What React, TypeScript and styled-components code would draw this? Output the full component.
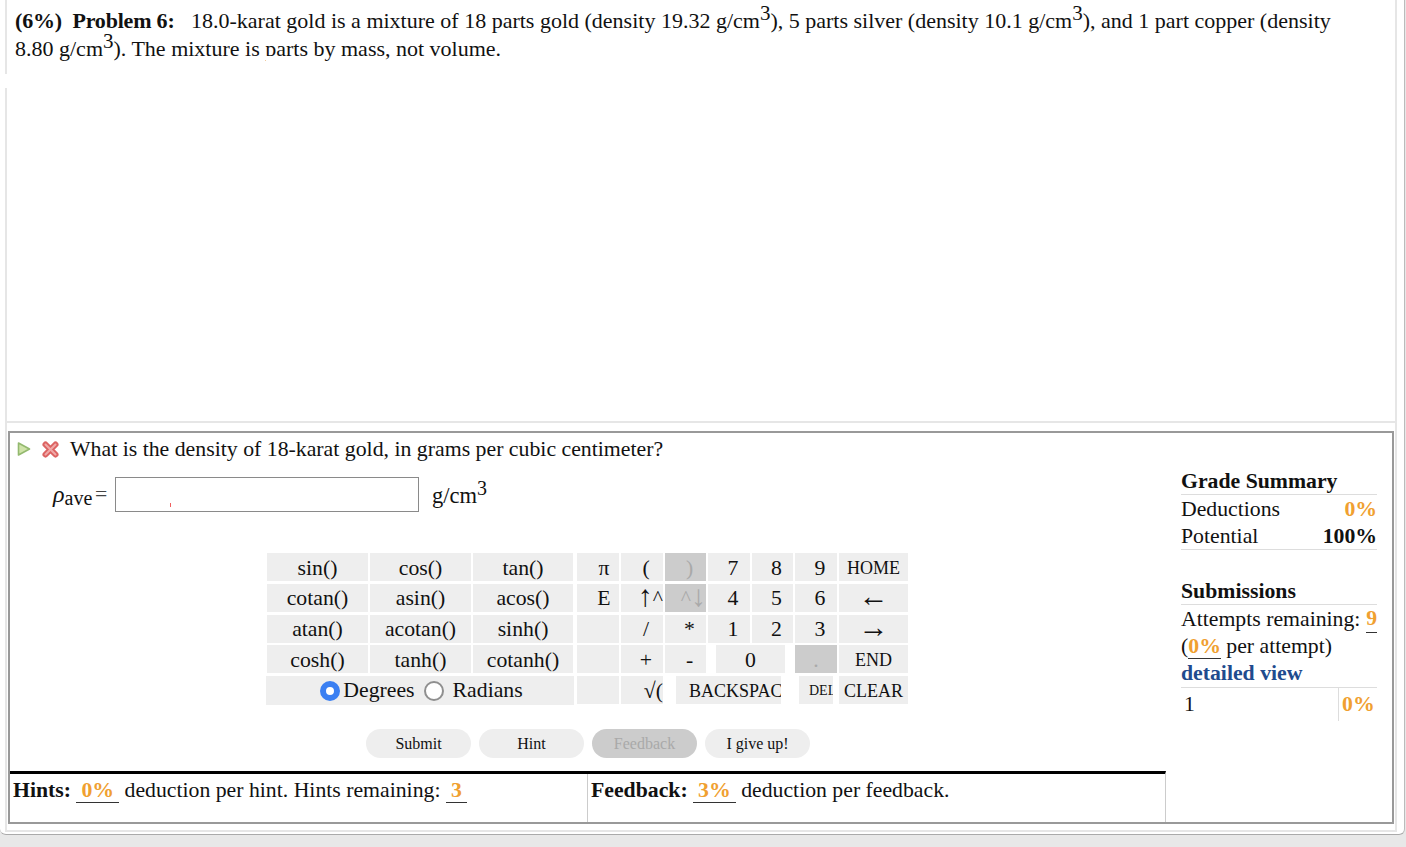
import styled, { createGlobalStyle } from "styled-components";

const GlobalStyle = createGlobalStyle`
  html, body {
    margin: 0;
    background: #e8e8e8;
  }
  body {
    font-family: "Liberation Serif", "Times New Roman", serif;
    color: #111;
    overflow: hidden;
  }
`;

const functionKeys = [
  "sin()", "cos()", "tan()",
  "cotan()", "asin()", "acos()",
  "atan()", "acotan()", "sinh()",
  "cosh()", "tanh()", "cotanh()",
];

export default function App() {
  return (
    <>
      <GlobalStyle />
      <Sheet>
        <Frame>
          <Statement>
            <StatementText>
              <b>(6%)&nbsp; Problem 6:</b>&nbsp;&nbsp; 18.0-karat gold is a mixture of 18 parts gold
              (density 19.32 g/cm<sup>3</sup>), 5 parts silver (density 10.1 g/cm<sup>3</sup>), and 1
              part copper (density 8.80 g/cm<sup>3</sup>). The mixture is parts by mass, not volume.
            </StatementText>
            <DescenderMask />
          </Statement>
          <QuestionBox>
            <MainColumn>
              <QuestionRow>
                <svg width="14" height="16" viewBox="0 0 14 16">
                  <path d="M1.5 2 L12.5 8 L1.5 14 Z" fill="#cfe3a8" stroke="#93b96f" strokeWidth="1.6" strokeLinejoin="round" />
                </svg>
                <svg width="19" height="19" viewBox="0 0 19 19">
                  <path d="M4.5 4.5 L14.5 14.5 M14.5 4.5 L4.5 14.5" stroke="#dc6362" strokeWidth="6" strokeLinecap="round" />
                  <path d="M4.5 4.5 L14.5 14.5 M14.5 4.5 L4.5 14.5" stroke="#f0a9a8" strokeWidth="2" strokeLinecap="round" />
                </svg>
                <QuestionText>What is the density of 18-karat gold, in grams per cubic centimeter?</QuestionText>
              </QuestionRow>
              <AnswerRow>
                <Symbol>
                  <i>ρ</i>
                  <sub>ave</sub>
                </Symbol>
                <Equals>=</Equals>
                <AnswerInput>
                  <RedMark />
                </AnswerInput>
                <Unit>
                  g/cm<sup>3</sup>
                </Unit>
              </AnswerRow>
              <Keypad>
                <FunctionGrid>
                  {functionKeys.map((key) => (
                    <Key key={key}>{key}</Key>
                  ))}
                  <AngleKey>
                    <Radio $checked />
                    Degrees
                    <Radio />
                    <AngleLabel>Radians</AngleLabel>
                  </AngleKey>
                </FunctionGrid>
                <NumberGrid>
                  <SymbolKey>π</SymbolKey>
                  <NumKey>(</NumKey>
                  <NumKey $off>)</NumKey>
                  <NumKey>7</NumKey>
                  <NumKey>8</NumKey>
                  <NumKey>9</NumKey>
                  <Key $size={18}>HOME</Key>

                  <SymbolKey>E</SymbolKey>
                  <EndKey>
                    <Arrow>↑</Arrow>^
                  </EndKey>
                  <EndKey $off>
                    ^<Arrow>↓</Arrow>
                  </EndKey>
                  <NumKey>4</NumKey>
                  <NumKey>5</NumKey>
                  <NumKey>6</NumKey>
                  <Key>
                    <Arrow>←</Arrow>
                  </Key>

                  <Key />
                  <NumKey>/</NumKey>
                  <NumKey>*</NumKey>
                  <NumKey>1</NumKey>
                  <NumKey>2</NumKey>
                  <NumKey>3</NumKey>
                  <Key>
                    <Arrow>→</Arrow>
                  </Key>

                  <Key />
                  <NumKey>+</NumKey>
                  <NumKey>-</NumKey>
                  <ZeroKey>0</ZeroKey>
                  <Key $off>.</Key>
                  <Key $size={18}>END</Key>

                  <Key />
                  <EndKey>√(</EndKey>
                  <BackspaceKey>
                    <Clipped>BACKSPACE</Clipped>
                  </BackspaceKey>
                  <DelKey>
                    <Clipped>DEL</Clipped>
                  </DelKey>
                  <Key $size={18}>CLEAR</Key>
                </NumberGrid>
              </Keypad>
              <ButtonRow>
                <PillButton>Submit</PillButton>
                <PillButton>Hint</PillButton>
                <PillButton $off>Feedback</PillButton>
                <PillButton>I give up!</PillButton>
              </ButtonRow>
              <HelpTable>
                <HelpCell>
                  <b>Hints:</b> <Blank $pad={5}>0%</Blank> deduction per hint. Hints remaining:{" "}
                  <Blank $pad={5}>3</Blank>
                </HelpCell>
                <HelpCell>
                  <b>Feedback:</b> <Blank $pad={5}>3%</Blank> deduction per feedback.
                </HelpCell>
              </HelpTable>
            </MainColumn>
            <Sidebar>
              <SideTitle>Grade Summary</SideTitle>
              <SummaryBlock>
                <SideRow>
                  Deductions <Orange>0%</Orange>
                </SideRow>
                <SideRow>
                  Potential <b>100%</b>
                </SideRow>
              </SummaryBlock>
              <SubmissionsTitle>Submissions</SubmissionsTitle>
              <SubmissionsBlock>
                <SideRow>
                  Attempts remaining: <Blank $pad={0}>9</Blank>
                </SideRow>
                <div>
                  (<Blank $pad={0}>0%</Blank> per attempt)
                </div>
                <DetailLink>detailed view</DetailLink>
              </SubmissionsBlock>
              <AttemptRow>
                <AttemptNumber>1</AttemptNumber>
                <AttemptValue>0%</AttemptValue>
              </AttemptRow>
            </Sidebar>
          </QuestionBox>
        </Frame>
        <BorderNotch />
      </Sheet>
    </>
  );
}

const Sheet = styled.div`
  position: relative;
  height: 835px;
  width: 1405px;
  box-sizing: border-box;
  padding-left: 5px;
  background: #fff;
  border-right: 1px solid #bbb;
  border-bottom: 1px solid #aaa;
  border-bottom-right-radius: 6px;
  border-bottom-left-radius: 6px;
`;

const BorderNotch = styled.div`
  position: absolute;
  left: 0;
  top: 74px;
  width: 9px;
  height: 14px;
  background: #fff;
`;

const Frame = styled.div`
  width: 1392px;
  height: 832px;
  box-sizing: border-box;
  border-left: 2px solid #e6e6e6;
  border-right: 2px solid #e6e6e6;
  border-bottom: 2px solid #e6e6e6;
  display: flex;
  flex-direction: column;
`;

const Statement = styled.div`
  position: relative;
  height: 423px;
  flex: none;
  box-sizing: border-box;
  border-bottom: 2px solid #e6e6e6;
  padding: 7px 40px 0 8px;
`;

const DescenderMask = styled.div`
  position: absolute;
  left: 259px;
  top: 56px;
  width: 12px;
  height: 7px;
  background: #fff;
`;

const StatementText = styled.div`
  font-size: 22px;
  line-height: 28px;

  b {
    letter-spacing: -0.2px;
  }

  sup {
    font-size: 21px;
    line-height: 0;
  }
`;

const QuestionBox = styled.div`
  margin: 8px 0 0 1px;
  width: 1386px;
  height: 393px;
  box-sizing: border-box;
  border: 2px solid #999;
  display: flex;
`;

const MainColumn = styled.div`
  width: 1156px;
  flex: none;
  display: flex;
  flex-direction: column;
`;

const QuestionRow = styled.div`
  display: flex;
  align-items: center;
  height: 30px;
  padding: 1px 0 0 7px;
  gap: 10px;
`;

const QuestionText = styled.span`
  font-size: 21.8px;
`;

const AnswerRow = styled.div`
  display: flex;
  align-items: center;
  height: 34px;
  margin-top: 13px;
  padding-left: 43px;
  font-size: 21.75px;
`;

const Symbol = styled.span`
  font-size: 24px;
  width: 42px;

  sub {
    font-size: 20px;
    line-height: 0;
    vertical-align: -3px;
  }
`;

const Equals = styled.span`
  width: 21px;
  color: #444;
`;

const AnswerInput = styled.div`
  position: relative;
  width: 304px;
  height: 35px;
  box-sizing: border-box;
  border: 1px solid #8a8a8a;
  margin-left: -1px;
`;

const RedMark = styled.span`
  position: absolute;
  left: 54px;
  bottom: 4px;
  width: 1px;
  height: 4px;
  background: #f06060;
`;

const Unit = styled.span`
  margin: 4px 0 0 13px;
  font-size: 22.5px;

  sup {
    font-size: 20px;
    line-height: 0;
  }
`;

const Keypad = styled.div`
  display: flex;
  gap: 4px;
  margin: 42px 0 0 257px;
`;

const FunctionGrid = styled.div`
  display: grid;
  grid-template-columns: 101px 101px 100px;
  grid-auto-rows: 28px;
  column-gap: 2px;
  row-gap: 2.75px;
`;

const NumberGrid = styled.div`
  display: grid;
  grid-template-columns: 42px 42px 41px 42px 41px 42px 69px;
  grid-auto-rows: 28px;
  column-gap: 2px;
  row-gap: 2.75px;
`;

const Key = styled.div<{ $off?: boolean; $size?: number }>`
  display: flex;
  align-items: center;
  justify-content: center;
  overflow: hidden;
  white-space: nowrap;
  box-sizing: border-box;
  padding-top: 2px;
  background: ${(p) => (p.$off ? "#cccccc" : "#eeeeee")};
  color: ${(p) => (p.$off ? "#a9a9a9" : "#111")};
  font-size: ${(p) => p.$size ?? 21.75}px;
`;

const NumKey = styled(Key)`
  padding-left: 8px;
`;

const SymbolKey = styled(Key)`
  padding-left: 12px;
`;

const EndKey = styled(Key)`
  justify-content: flex-end;
`;

const Arrow = styled.span`
  font-size: 30px;
  line-height: 24px;
  transform: translateY(-3px);
`;

const AngleKey = styled(Key)`
  grid-column: 1 / span 3;
  margin: 0 -1px -1px;
  padding: 0 0 0 3px;
  gap: 3px;
`;

const AngleLabel = styled.span`
  margin-left: 6px;
`;

const Radio = styled.span<{ $checked?: boolean }>`
  flex: none;
  width: 20px;
  height: 20px;
  box-sizing: border-box;
  border-radius: 50%;
  background: #fff;
  border: ${(p) => (p.$checked ? "6px solid #3a7ff2" : "2px solid #8f8f8f")};
  margin-left: ${(p) => (p.$checked ? 0 : 6)}px;
`;

const ZeroKey = styled(Key)`
  grid-column: span 2;
  margin: 0 8px;
`;

const BackspaceKey = styled(Key)`
  grid-column: 3 / span 3;
  margin-left: 11px;
  margin-right: 12px;
  font-size: 18px;
  justify-content: flex-start;
  padding-left: 13px;
`;

const DelKey = styled(Key)`
  margin: 0 4px;
  font-size: 14px;
  justify-content: flex-start;
  padding-left: 10px;
`;

const Clipped = styled.span`
  display: block;
  overflow: hidden;
  flex: 1;
`;

const ButtonRow = styled.div`
  display: flex;
  gap: 8px;
  margin: 25px 0 0 356px;
`;

const PillButton = styled.div<{ $off?: boolean }>`
  width: 105px;
  height: 29px;
  border-radius: 15px;
  display: flex;
  align-items: center;
  justify-content: center;
  font-size: 16px;
  background: ${(p) => (p.$off ? "#cccccc" : "#eeeeee")};
  color: ${(p) => (p.$off ? "#a9a9a9" : "#111")};
`;

const HelpTable = styled.div`
  margin-top: auto;
  height: 51px;
  box-sizing: border-box;
  border-top: 3px solid #000;
  border-right: 1px solid #ccc;
  display: grid;
  grid-template-columns: 577px 1fr;
  font-size: 21.75px;
`;

const HelpCell = styled.div`
  padding: 3px 0 0 3px;
  line-height: 26px;

  & + & {
    border-left: 1px solid #ccc;
    padding-left: 3px;
  }
`;

const Blank = styled.span<{ $pad: number }>`
  display: inline-block;
  line-height: 24px;
  padding: 0 ${(p) => p.$pad}px;
  border-bottom: 1px solid #333;
  color: #f0a030;
  font-weight: bold;
`;

const Orange = styled.b`
  color: #f0a030;
`;

const Sidebar = styled.div`
  width: 196px;
  margin: 35px 0 0 15px;
  font-size: 21.75px;
  line-height: 27px;
`;

const SideTitle = styled.div`
  font-weight: bold;
  line-height: 26px;
  border-bottom: 1px solid #ddd;
`;

const SummaryBlock = styled.div`
  height: 53px;
  border-bottom: 1px solid #ddd;
  padding-top: 1px;
`;

const SubmissionsTitle = styled(SideTitle)`
  margin-top: 28px;
`;

const SubmissionsBlock = styled.div`
  padding-top: 1px;
  border-bottom: 1px solid #ddd;
`;

const SideRow = styled.div`
  display: flex;
  justify-content: space-between;
`;

const DetailLink = styled.div`
  color: #1f4b8e;
  font-weight: bold;
`;

const AttemptRow = styled.div`
  display: flex;
  height: 33px;
  align-items: center;
`;

const AttemptNumber = styled.span`
  width: 158px;
  box-sizing: border-box;
  padding-left: 3px;
  align-self: stretch;
  display: flex;
  align-items: center;
  border-right: 1px solid #ddd;
`;

const AttemptValue = styled.b`
  color: #f0a030;
  margin-left: 3px;
`;
